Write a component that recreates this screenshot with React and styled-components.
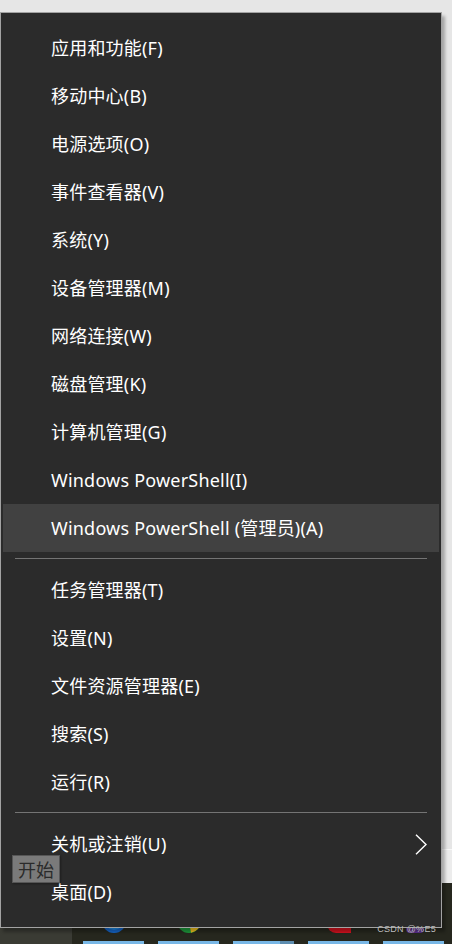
import React from 'react';
import styled, { createGlobalStyle } from 'styled-components';

const GlobalStyle = createGlobalStyle`
  html, body {
    margin: 0;
    padding: 0;
    background: #e6e6e6;
  }
  body {
    font-family: 'Noto Sans', 'Noto Sans CJK SC', sans-serif;
  }
`;

const Desktop = styled.div`
  position: relative;
  width: 452px;
  height: 944px;
  overflow: hidden;
  display: grid;
  grid-template-columns: 1fr;
  grid-template-rows: 1fr;
  background: linear-gradient(
    to bottom,
    #e6e6e6 0,
    #e6e6e6 849px,
    #f8f8f8 849px,
    #f8f8f8 850px,
    #ececec 850px
  );
`;

const Taskbar = styled.div`
  grid-area: 1 / 1;
  align-self: end;
  height: 61px;
  display: flex;
  background: #26271e;
`;

const StartZone = styled.div`
  width: 72px;
  flex-shrink: 0;
  background: #3a3b34;
`;

const TaskButtons = styled.div`
  display: flex;
  padding-left: 4px;
`;

const TaskButton = styled.div`
  width: 75px;
  display: flex;
  flex-direction: column;
  align-items: center;
`;

const TaskIcon = styled.div`
  margin-top: 26px;
  width: 24px;
  height: 24px;
  display: flex;
  justify-content: center;
`;

const RunBar = styled.div`
  margin-top: auto;
  width: 61px;
  height: 3px;
  background: ${(p) => p.$split
    ? 'linear-gradient(to right, #78b7e6 0, #78b7e6 47px, #5d8db0 47px)'
    : '#78b7e6'};
`;

const Menu = styled.nav`
  grid-area: 1 / 1;
  align-self: start;
  position: relative;
  z-index: 1;
  margin-top: 12px;
  width: 442px;
  box-sizing: border-box;
  padding: 11px 2px;
  background: #2b2b2b;
  border: 1px solid #a3a3a3;
  box-shadow: 3px 4px 3px rgba(0, 0, 0, 0.28);
`;

const Item = styled.div`
  height: 48px;
  display: flex;
  align-items: center;
  justify-content: space-between;
  padding: 0 12px 0 48px;
  color: #ffffff;
  font-size: 18px;
  letter-spacing: 0.2px;
  line-height: 1;
  white-space: nowrap;
  background: ${(p) => (p.$active ? '#414141' : 'transparent')};
`;

const Separator = styled.div`
  height: 1px;
  margin: 6px 12px 7px;
  background: #747474;
`;

const Tooltip = styled.div`
  position: absolute;
  z-index: 2;
  left: 12px;
  top: 855px;
  width: 48px;
  height: 28px;
  box-sizing: border-box;
  display: flex;
  align-items: center;
  justify-content: center;
  background: #7a7a7a;
  border: 1px solid #565656;
  color: #2a2a2a;
  font-size: 18px;
  box-shadow: 1px 1px 2px rgba(0, 0, 0, 0.3);
`;

const Watermark = styled.div`
  position: absolute;
  z-index: 2;
  right: 16px;
  top: 924px;
  font-family: 'Liberation Sans', sans-serif;
  font-size: 9px;
  letter-spacing: 0.3px;
  color: #bdbdbd;
`;

const Chevron = () => (
  <svg width="12" height="21" viewBox="0 0 12 21">
    <polyline points="1,0.8 11,10.5 1,20.2" fill="none" stroke="#ffffff" strokeWidth="1.4" />
  </svg>
);

const groups = [
  [
    '应用和功能(F)',
    '移动中心(B)',
    '电源选项(O)',
    '事件查看器(V)',
    '系统(Y)',
    '设备管理器(M)',
    '网络连接(W)',
    '磁盘管理(K)',
    '计算机管理(G)',
    'Windows PowerShell(I)',
    'Windows PowerShell (管理员)(A)',
  ],
  ['任务管理器(T)', '设置(N)', '文件资源管理器(E)', '搜索(S)', '运行(R)'],
  ['关机或注销(U)', '桌面(D)'],
];

const icons = [
  <svg width="24" height="24"><circle cx="12" cy="12" r="12" fill="#1565c8" /><circle cx="12" cy="11" r="10" fill="#1e88e0" /></svg>,
  <svg width="24" height="24"><circle cx="12" cy="12" r="12" fill="#1e9a3c" /><path d="M12 12 L24 12 A12 12 0 0 1 14 23.8 Z" fill="#f2c01e" /></svg>,
  null,
  <svg width="36" height="24"><rect x="0" y="0" width="36" height="24" rx="9" fill="#d3121f" /></svg>,
  <svg width="24" height="24"><rect x="4" y="0" width="18" height="24" rx="4" fill="#5a2f8a" /></svg>,
];

export default function App() {
  return (
    <>
      <GlobalStyle />
      <Desktop>
        <Taskbar>
          <StartZone />
          <TaskButtons>
            {icons.map((icon, i) => (
              <TaskButton key={i}>
                <TaskIcon>{icon}</TaskIcon>
                <RunBar $split={i === 2} />
              </TaskButton>
            ))}
          </TaskButtons>
        </Taskbar>

        <Menu>
          {groups.map((group, gi) => (
            <React.Fragment key={gi}>
              {gi > 0 && <Separator />}
              {group.map((label) => (
                <Item key={label} $active={label.includes('管理员')}>
                  <span>{label}</span>
                  {label.startsWith('关机') && <Chevron />}
                </Item>
              ))}
            </React.Fragment>
          ))}
        </Menu>

        <Tooltip>开始</Tooltip>
        <Watermark>CSDN @%E5</Watermark>
      </Desktop>
    </>
  );
}
